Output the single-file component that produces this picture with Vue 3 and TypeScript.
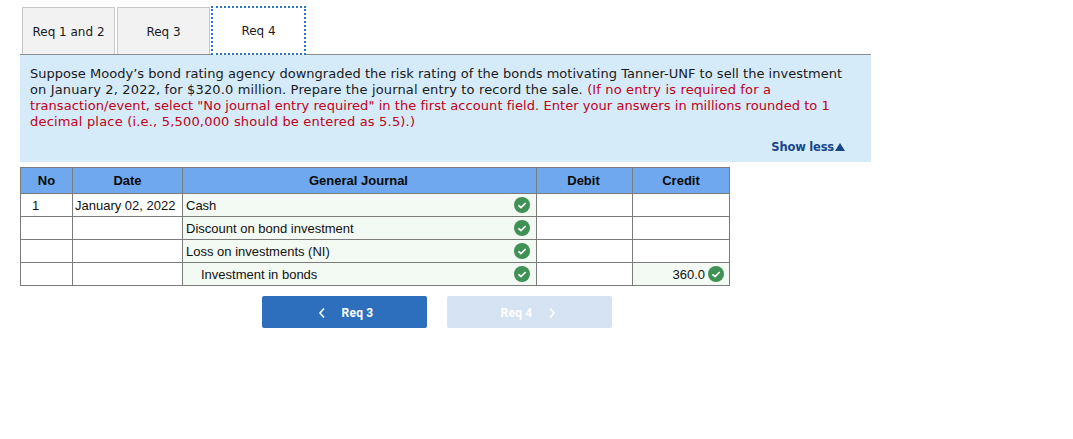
<script setup lang="ts">
interface Row { no: string; date: string; account: string; indent: boolean; credit: string }
const rows: Row[] = [
  { no: '1', date: 'January 02, 2022', account: 'Cash', indent: false, credit: '' },
  { no: '', date: '', account: 'Discount on bond investment', indent: false, credit: '' },
  { no: '', date: '', account: 'Loss on investments (NI)', indent: false, credit: '' },
  { no: '', date: '', account: 'Investment in bonds', indent: true, credit: '360.0' },
]
</script>

<template>
  <div class="page">
    <div class="tabs">
      <button class="tab">Req 1 and 2</button>
      <button class="tab">Req 3</button>
      <button class="tab active">Req 4</button>
    </div>
    <section class="panel">
      <p class="prompt">
        <span class="l1">Suppose Moody’s bond rating agency downgraded the risk rating of the bonds motivating Tanner-UNF to sell the investment</span><br>
        <span class="l2">on January 2, 2022, for $320.0 million. Prepare the journal entry to record the sale. </span><span class="red l2">(If no entry is required for a</span><br>
        <span class="red l3">transaction/event, select "No journal entry required" in the first account field. Enter your answers in millions rounded to 1</span><br>
        <span class="red l4">decimal place (i.e., 5,500,000 should be entered as 5.5).)</span>
      </p>
      <div class="show">Show less<span class="tri"></span></div>
    </section>
    <table class="journal">
      <colgroup>
        <col class="c1"><col class="c2"><col class="c3"><col class="c4"><col class="c5">
      </colgroup>
      <thead>
        <tr><th>No</th><th>Date</th><th class="shift">General Journal</th><th class="shift">Debit</th><th>Credit</th></tr>
      </thead>
      <tbody>
        <tr v-for="(r, i) in rows" :key="i">
          <td class="no">{{ r.no }}</td>
          <td class="date">{{ r.date }}</td>
          <td class="acct">
            <div class="cellin">
              <span :class="{ indent: r.indent }">{{ r.account }}</span>
              <svg class="check" viewBox="0 0 16 16"><circle cx="8" cy="8" r="8" fill="#3f9155"/><path d="M4.4 8.3 7 10.5 11.7 6" fill="none" stroke="#fff" stroke-width="1.7"/></svg>
            </div>
          </td>
          <td></td>
          <td :class="{ acct: r.credit }">
            <div v-if="r.credit" class="cellin end">
              <span>{{ r.credit }}</span>
              <svg class="check" viewBox="0 0 16 16"><circle cx="8" cy="8" r="8" fill="#3f9155"/><path d="M4.4 8.3 7 10.5 11.7 6" fill="none" stroke="#fff" stroke-width="1.7"/></svg>
            </div>
          </td>
        </tr>
      </tbody>
    </table>
    <div class="nav">
      <button class="navbtn prev">
        <svg class="chev" viewBox="0 0 8 12"><path d="M6 1.5 2 6l4 4.5" fill="none" stroke="#fff" stroke-width="1.6"/></svg>
        <span>Req 3</span>
      </button>
      <button class="navbtn next">
        <span>Req 4</span>
        <svg class="chev" viewBox="0 0 8 12"><path d="M2 1.5 6 6l-4 4.5" fill="none" stroke="#fff" stroke-width="1.6"/></svg>
      </button>
    </div>
  </div>
</template>

<style scoped>
.page {
  width: 1073px;
  height: 439px;
  box-sizing: border-box;
  padding: 7px 0 0 20px;
  overflow: hidden;
  background: #fff;
}
.tabs {
  width: 851px;
  height: 48px;
  box-sizing: border-box;
  display: flex;
  padding-left: 2px;
  gap: 2px;
  border-bottom: 1px solid #8e8e8e;
}
.tab {
  width: 93px;
  height: 47px;
  margin: 0;
  padding: 2px 0 0;
  box-sizing: border-box;
  background: #f2f2f2;
  border: 1px solid #c8c8c8;
  border-bottom: none;
  font: 12px "DejaVu Sans", Verdana, sans-serif;
  color: #1a1a1a;
}
.tab.active {
  background: #fff;
  width: 95px;
  height: 49px;
  margin: -1px 0 0 -1px;
  padding-top: 1px;
  outline: none;
  border: 2px dotted #2f73c4;
  position: relative;
}
.panel {
  width: 851px;
  height: 107px;
  box-sizing: border-box;
  background: #d6ebfa;
  padding: 11px 10px 0;
  position: relative;
}
.prompt {
  margin: 0;
  font: 13px/16px "DejaVu Sans", Verdana, sans-serif;
  color: #1a1a1a;
  white-space: nowrap;
}
.l1 { letter-spacing: 0.017px; }
.l2 { letter-spacing: 0.145px; }
.l3 { letter-spacing: 0.056px; }
.l4 { letter-spacing: 0.19px; }
.red { color: #c00018; }
.show {
  position: absolute;
  right: 26px;
  top: 85px;
  display: flex;
  align-items: center;
  gap: 1px;
  font: bold 11.5px/14px "DejaVu Sans", Verdana, sans-serif;
  letter-spacing: -0.2px;
  color: #17478a;
}
.tri {
  width: 0;
  height: 0;
  border-left: 5.5px solid transparent;
  border-right: 5.5px solid transparent;
  border-bottom: 8px solid #17478a;
}
.journal {
  margin-top: 5px;
  width: 710px;
  table-layout: fixed;
  border-collapse: collapse;
  font: 13px "Liberation Sans", Arial, sans-serif;
  color: #111;
}
.c1 { width: 52px; }
.c2 { width: 110px; }
.c3 { width: 354px; }
.c4 { width: 96px; }
.c5 { width: 97px; }
.journal th, .journal td {
  border: 1px solid #7b7b7b;
  padding: 0;
  box-sizing: border-box;
}
.journal th {
  height: 26px;
  background: #6fa8ee;
  font-weight: bold;
  color: #0a0a0a;
}
.journal th.shift { padding-right: 2px; }
.journal td { height: 23px; padding-top: 1px; }
.journal .cellin { margin-top: -1px; }
.no { padding-left: 11px !important; }
.date { padding-left: 2px !important; white-space: nowrap; }
.acct { background: #f3f9f3; padding-left: 3px !important; }
.cellin {
  display: flex;
  align-items: center;
  justify-content: space-between;
  padding-right: 6px;
}
.cellin.end { justify-content: flex-end; gap: 3px; padding-right: 5px; }
.indent { padding-left: 15px; }
.check { width: 16px; height: 16px; display: block; }
.nav {
  display: flex;
  gap: 20px;
  margin: 10px 0 0 242px;
}
.navbtn {
  width: 165px;
  height: 32px;
  border: none;
  border-radius: 2px;
  padding: 1px 0 0;
  display: flex;
  align-items: center;
  justify-content: center;
  gap: 16px;
  font: bold 12px Roboto, "Liberation Sans", sans-serif;
  letter-spacing: 0.2px;
  color: #fff;
}
.chev { width: 8px; height: 12px; display: block; }
.prev { background: #2d6fbd; padding-left: 2px; }
.next { background: #d6e3f3; padding-right: 2px; gap: 16px; }
</style>
